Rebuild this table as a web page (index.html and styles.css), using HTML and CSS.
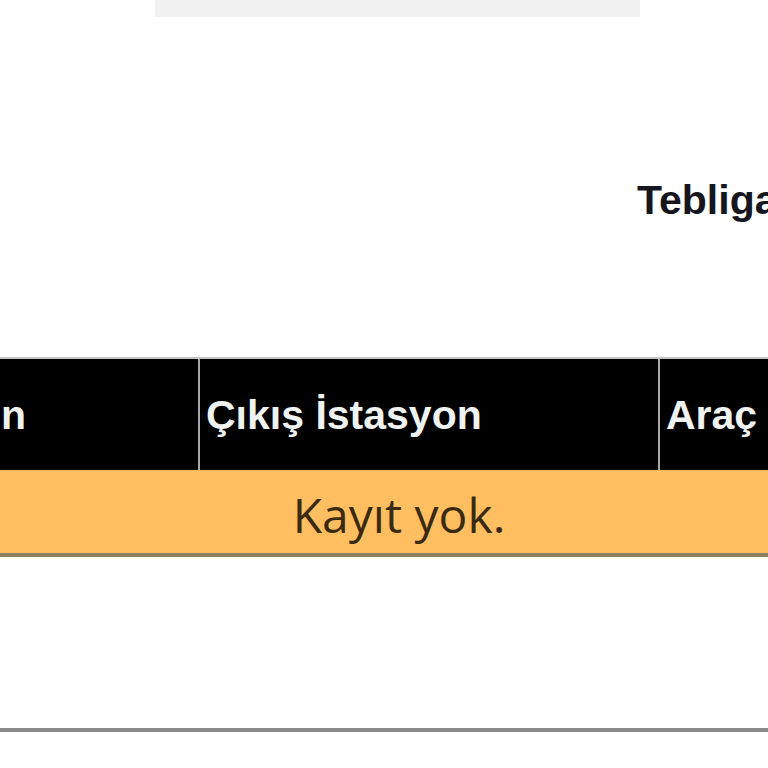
FILE: index.html
```html
<!DOCTYPE html>
<html lang="tr">
<head>
<meta charset="utf-8">
<link rel="stylesheet" href="styles.css">
</head>
<body>
<div class="page">
  <div class="topbar"></div>
  <div class="title">Tebligat</div>
  <div class="table">
    <div class="thead">
      <div class="th">Giriş İstasyon</div>
      <div class="th">Çıkış İstasyon</div>
      <div class="th">Araç Plaka</div>
    </div>
    <div class="empty">Kayıt yok.</div>
  </div>
  <div class="rule"></div>
</div>
</body>
</html>
```
FILE: styles.css
```css
html, body {
  margin: 0;
  padding: 0;
  background: #fff;
}
body {
  width: 768px;
  height: 768px;
  overflow: hidden;
}
.page {
  display: flex;
  flex-direction: column;
  width: 768px;
}
.topbar {
  margin-left: 155px;
  width: 485px;
  height: 17px;
  background: #f1f1f1;
}
.title {
  margin-top: 159px;
  padding-left: 637px;
  height: 48px;
  line-height: 48px;
  font-family: "Liberation Sans", Arial, sans-serif;
  font-weight: bold;
  font-size: 41px;
  color: #16161f;
  white-space: nowrap;
}
.table {
  margin-top: 133px;
  margin-left: -251px;
  width: 1300px;
  flex-shrink: 0;
}
.thead {
  display: grid;
  grid-template-columns: 449px 460px 391px;
  border-top: 2px solid #c4c4c4;
  background: #000;
  height: 111px;
}
.th {
  display: flex;
  align-items: center;
  padding-left: 6px;
  padding-top: 2px;
  box-sizing: border-box;
  font-family: "Liberation Sans", Arial, sans-serif;
  font-weight: bold;
  font-size: 41px;
  color: #eef2f0;
  white-space: nowrap;
  overflow: hidden;
}
.th + .th {
  border-left: 2px solid #a8a8a8;
}
.empty {
  background: #ffbf60;
  height: 87px;
  padding-top: 6px;
  box-sizing: border-box;
  line-height: 77px;
  text-align: center;
  font-family: "Open Sans", sans-serif;
  font-size: 48px;
  color: #3a2a10;
  border-bottom: 4px solid #8e7f66;
}
.rule {
  margin-top: 171px;
  height: 4px;
  background: #8a8a8a;
}
```
